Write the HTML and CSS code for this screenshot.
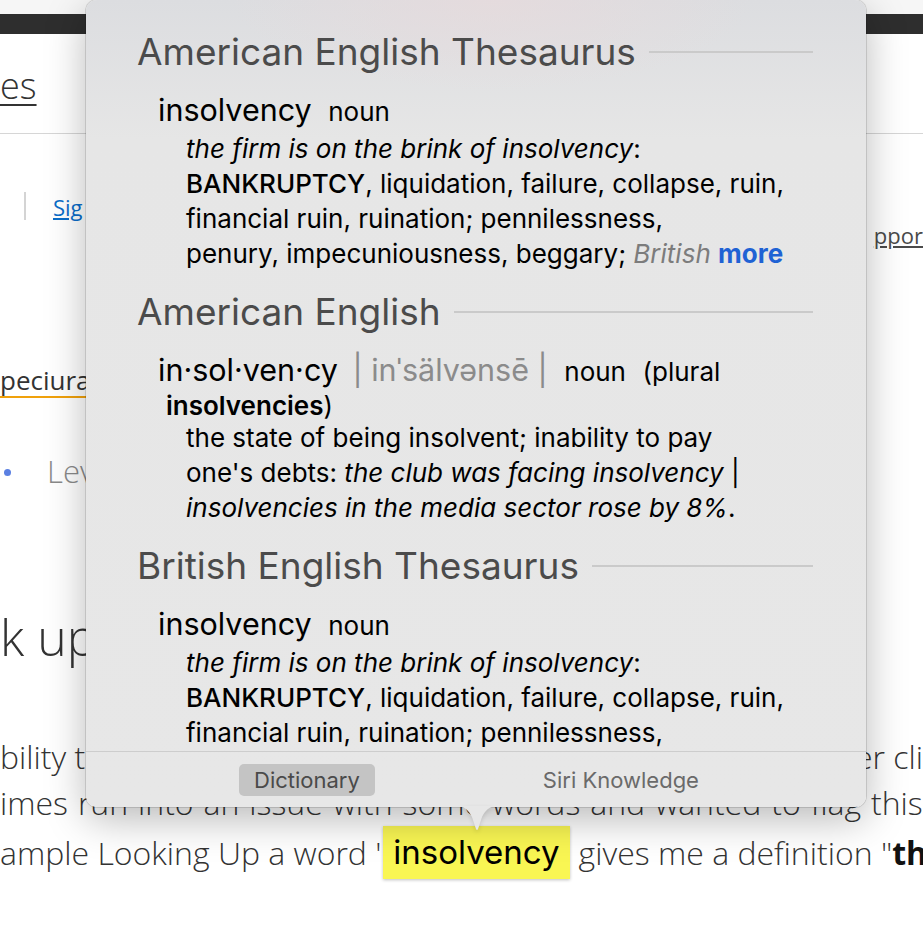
FILE: index.html
```html
<!DOCTYPE html>
<html lang="en">
<head>
<meta charset="UTF-8">
<title>Look Up</title>
<link rel="stylesheet" href="styles.css">
</head>
<body>
<div class="page">
    <div class="topstrip"></div>
    <div class="navbar"></div>

    <div class="crumbs"><a href="#">es</a></div>

    <div class="subnav">
        <span class="sep"></span>
        <a class="signin" href="#">Sig</a>
        <a class="support" href="#">ppor</a>
    </div>

    <div class="tag"><span>peciura</span></div>

    <ul class="levels">
        <li>Lev</li>
    </ul>

    <h2 class="question">k up</h2>

    <div class="post">
        <div class="line split"><span>bility to</span><span>er cli</span></div>
        <div class="line wide">imes run into an issue with some words and wanted to flag this</div>
        <div class="line">ample Looking Up a word '<mark class="hit">insolvency</mark>gives me a definition "<b>th</b></div>
    </div>

    <!-- dictionary popover -->
    <div class="lookup">
        <div class="lookup-body">
            <section class="dict">
                <h3 class="dict-title">American English Thesaurus</h3>
                <div class="entry">
                    <div class="head">insolvency <span class="pos">noun</span></div>
                    <div class="sense">
                        <i>the firm is on the brink of insolvency</i>:<br>
                        <span class="caps">BANKRUPTCY</span>, liquidation, failure, collapse, ruin,<br>
                        financial ruin, ruination; pennilessness,<br>
                        penury, impecuniousness, beggary; <i class="reg">British</i> <a class="more" href="#">more</a>
                    </div>
                </div>
            </section>

            <section class="dict">
                <h3 class="dict-title">American English</h3>
                <div class="entry">
                    <div class="head wrap">in·sol·ven·cy <span class="pron">| inˈsälvənsē |</span> <span class="pos">noun</span> <span class="pos">(plural<br><b>insolvencies</b>)</span></div>
                    <div class="sense">
                        the state of being insolvent; inability to pay<br>
                        one's debts: <i>the club was facing insolvency</i> |<br>
                        <i>insolvencies in the media sector rose by 8%</i>.
                    </div>
                </div>
            </section>

            <section class="dict">
                <h3 class="dict-title">British English Thesaurus</h3>
                <div class="entry">
                    <div class="head">insolvency <span class="pos">noun</span></div>
                    <div class="sense">
                        <i>the firm is on the brink of insolvency</i>:<br>
                        <span class="caps">BANKRUPTCY</span>, liquidation, failure, collapse, ruin,<br>
                        financial ruin, ruination; pennilessness,
                    </div>
                </div>
            </section>
        </div>
        <div class="lookup-tabs">
            <span class="tab active">Dictionary</span>
            <span class="tab">Siri Knowledge</span>
        </div>
        <svg class="beak" width="40" height="26" viewBox="0 0 40 26">
            <path d="M0 0 C8 0 12 5 15 11 L19 23 Q20 25 21 23 L25 11 C28 5 32 0 40 0 Z" fill="#e7e7e7"/>
        </svg>
    </div>
</div>
</body>
</html>
```

FILE: styles.css
```css
body {
    margin: 0;
    background: #fff;
    font-family: "Open Sans", "Liberation Sans", sans-serif;
    font-weight: 300;
    color: #333;
}
.page {
    position: relative;
    width: 923px;
    height: 929px;
    overflow: hidden;
}
a {
    color: inherit;
}

/* site header */
.topstrip {
    height: 14px;
    background: #f6f6f6;
}
.navbar {
    height: 20px;
    background: #2e2e2e;
}
.crumbs {
    height: 99px;
    border-bottom: 1px solid #d6d6d6;
    font-size: 36px;
    line-height: 104px;
}
.crumbs a {
    text-decoration-thickness: 2px;
    text-underline-offset: 5px;
}

.subnav {
    display: flex;
    align-items: flex-start;
    height: 172px;
    padding-top: 58px;
    box-sizing: border-box;
    font-size: 22px;
    font-weight: 400;
}
.subnav .sep {
    width: 2px;
    height: 28px;
    background: #d4d4d4;
    margin: 0 27px 0 24px;
}
.subnav .signin {
    color: #0b6dc9;
}
.subnav .support {
    margin-left: auto;
    margin-top: 28px;
    color: #4a4a4a;
}

.tag {
    margin-top: 58px;
    font-size: 26px;
    font-weight: 400;
    line-height: 32px;
}
.tag span {
    display: inline-block;
    border-bottom: 2px solid #f0a10c;
}

.levels {
    list-style: none;
    margin: 52px 0 0;
    padding: 0 0 0 47px;
    font-size: 31px;
    color: #8a8a8a;
}
.levels li {
    position: relative;
}
.levels li::before {
    content: "";
    position: absolute;
    left: -43px;
    top: 19px;
    width: 7px;
    height: 7px;
    border-radius: 50%;
    background: #5b80e2;
}

.question {
    margin: 115px 0 0;
    font-size: 50px;
    font-weight: 300;
    line-height: 60px;
}

.post {
    margin-top: 67px;
    font-size: 32px;
    line-height: 46px;
    white-space: nowrap;
}
.line {
    display: flex;
    align-items: center;
}
.line.split {
    justify-content: space-between;
}
.line.wide {
    word-spacing: 1.6px;
}
.hit {
    display: inline-block;
    background: #f9f653;
    color: #000;
    font-family: Inter, "Noto Sans", sans-serif;
    font-weight: 400;
    font-size: 33px;
    line-height: 53px;
    padding: 0 10px;
    margin: 0 9px 0 2px;
    box-shadow: 0 1px 3px rgba(0, 0, 0, 0.25);
}
.line b {
    font-weight: 700;
    color: #111;
}

/* dictionary popover */
.lookup {
    position: absolute;
    left: 86px;
    top: 0;
    width: 780px;
    height: 807px;
    border-radius: 11px;
    background:
        radial-gradient(ellipse 260px 90px at 52% 0, rgba(232, 218, 220, 0.7), transparent),
        linear-gradient(#dcdde0, #e6e6e6 140px, #e7e7e7);
    box-shadow: 0 0 0 1px rgba(0, 0, 0, 0.12), 0 12px 40px rgba(0, 0, 0, 0.28);
    font-family: Inter, "Noto Sans", sans-serif;
    font-weight: 400;
    color: #000;
}
.lookup-body {
    height: 751px;
    overflow: hidden;
    padding: 31px 53px 0 51px;
    box-sizing: border-box;
}
.dict {
    margin-bottom: 20px;
}
.dict-title {
    display: flex;
    align-items: center;
    gap: 13px;
    margin: 0;
    font-size: 37px;
    font-weight: 400;
    line-height: 42px;
    color: #4b4b4b;
}
.dict-title::after {
    content: "";
    flex: 1;
    height: 2px;
    background: #cacaca;
}
.entry {
    padding-left: 29px;
}
.head {
    margin-top: 20px;
    text-indent: -8px;
    font-size: 30.5px;
    line-height: 34px;
    white-space: nowrap;
}
.head span {
    line-height: 1;
}
.head .pos {
    font-size: 26px;
    margin-left: 8px;
}
.head .pron {
    color: #8b8b8b;
    margin-left: 6px;
}
.head b {
    font-weight: 600;
}
.sense {
    margin-top: 4px;
    padding-left: 20px;
    font-size: 26px;
    line-height: 35px;
    white-space: nowrap;
}
.head.wrap + .sense {
    margin-top: -1px;
}
.caps {
    font-weight: 500;
}
.reg {
    color: #7c7c7c;
}
.more {
    color: #1f62d4;
    font-weight: 700;
    text-decoration: none;
}

.lookup-tabs {
    height: 55px;
    border-top: 1px solid #cdcdcd;
    display: flex;
    align-items: center;
    font-size: 22px;
    line-height: 26px;
    color: #6a6a6a;
}
.tab {
    padding: 3px 15px;
    border-radius: 5px;
}
.tab.active {
    margin-left: 153px;
    background: #c4c4c4;
    color: #4a4a4a;
}
.tab + .tab {
    margin-left: 153px;
}
.beak {
    position: absolute;
    left: 371px;
    top: 806px;
    filter: drop-shadow(0 2px 2px rgba(0, 0, 0, 0.12));
}
```
